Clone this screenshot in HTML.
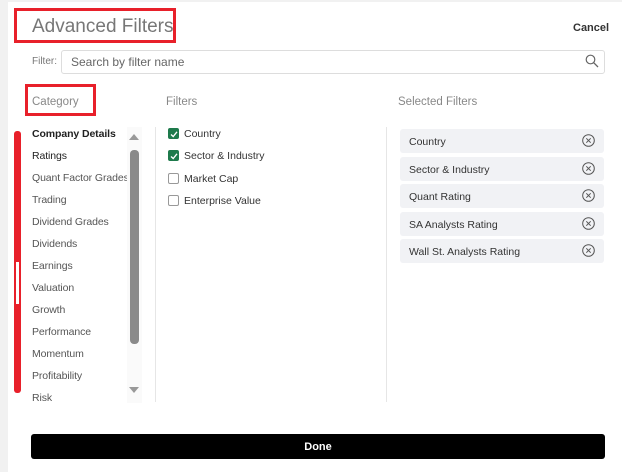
<!DOCTYPE html>
<html><head><meta charset="utf-8"><style>
*{margin:0;padding:0;box-sizing:border-box}
body{width:622px;height:472px;overflow:hidden;background:#f1f1f1;font-family:"Liberation Sans",Arial,sans-serif;position:relative}
.m{position:absolute;left:8px;top:2px;right:0;bottom:0;background:#fff}
.a{position:absolute;white-space:nowrap}
.cat{position:absolute;left:32px;font-size:10.5px;color:#555;letter-spacing:-0.1px;white-space:nowrap}
.cb{position:absolute;left:168px;width:11px;height:11px;border-radius:2px;border:1px solid #999;background:#fff}
.cb.on{background:#1e7a4c;border-color:#1e7a4c}
.fl{position:absolute;left:184px;font-size:10.5px;color:#333}
.chip{position:absolute;left:400px;width:204px;height:24px;background:#f1f2f5;border-radius:3px;font-size:10.5px;color:#333;padding:7px 0 0 9px}
.x{position:absolute;right:9px;top:5px;width:13px;height:13px}
</style></head><body>
<div class="m"></div>
<div class="a" style="left:14px;top:8px;width:162px;height:35px;border:3px solid #e8202a"></div>
<div class="a" style="left:32px;top:16px;font-size:19px;color:#777">Advanced Filters</div>
<div class="a" style="left:573px;top:22px;font-size:11px;font-weight:bold;color:#333">Cancel</div>
<div class="a" style="left:32px;top:56px;font-size:10px;color:#777">Filter:</div>
<div class="a" style="left:61px;top:50px;width:544px;height:24px;border:1px solid #ddd;border-radius:3px"></div>
<div class="a" style="left:71px;top:55px;font-size:12px;color:#666">Search by filter name</div>
<svg class="a" style="left:585px;top:54px" width="14" height="14" viewBox="0 0 14 14"><circle cx="5.5" cy="5.5" r="4.3" fill="none" stroke="#666" stroke-width="1.2"/><path d="M8.7 8.7L13 13" stroke="#666" stroke-width="1.3"/></svg>
<div class="a" style="left:25px;top:84px;width:71px;height:32px;border:3px solid #e8202a"></div>
<div class="a" style="left:32px;top:96px;font-size:11.5px;color:#888">Category</div>
<div class="a" style="left:166px;top:96px;font-size:11.5px;color:#888">Filters</div>
<div class="a" style="left:398px;top:96px;font-size:11.5px;color:#888">Selected Filters</div>
<div class="cat" style="top:128px;color:#222;font-weight:bold">Company Details</div>
<div class="cat" style="top:150px;color:#222">Ratings</div>
<div class="cat" style="top:172px">Quant Factor Grades</div>
<div class="cat" style="top:194px">Trading</div>
<div class="cat" style="top:216px">Dividend Grades</div>
<div class="cat" style="top:238px">Dividends</div>
<div class="cat" style="top:260px">Earnings</div>
<div class="cat" style="top:282px">Valuation</div>
<div class="cat" style="top:304px">Growth</div>
<div class="cat" style="top:326px">Performance</div>
<div class="cat" style="top:348px">Momentum</div>
<div class="cat" style="top:370px">Profitability</div>
<div class="cat" style="top:392px;height:10px;overflow:hidden">Risk</div>
<div class="a" style="left:127px;top:127px;width:15px;height:276px;background:#fafafa"></div>
<div class="a" style="left:130px;top:150px;width:9px;height:194px;background:#8a8a8a;border-radius:4px"></div>
<div class="a" style="left:129px;top:134px;width:0;height:0;border-left:5px solid transparent;border-right:5px solid transparent;border-bottom:6px solid #999"></div>
<div class="a" style="left:129px;top:387px;width:0;height:0;border-left:5px solid transparent;border-right:5px solid transparent;border-top:6px solid #999"></div>
<div class="a" style="left:155px;top:127px;width:1px;height:275px;background:#e6e6e6"></div>
<div class="a" style="left:386px;top:127px;width:1px;height:275px;background:#e6e6e6"></div>
<div class="a" style="left:14px;top:131px;width:7px;height:262px;background:#e8202a;border-radius:3px"></div>
<div class="a" style="left:16px;top:262px;width:3px;height:42px;background:#fff"></div>
<div class="cb on" style="top:128px"></div><svg class="a" style="left:170px;top:130px" width="8" height="8"><path d="M1 4.5L3.2 6.5L7 1.8" stroke="#fff" stroke-width="1.3" fill="none"/></svg>
<div class="fl" style="top:128px">Country</div>
<div class="cb on" style="top:150px"></div><svg class="a" style="left:170px;top:152px" width="8" height="8"><path d="M1 4.5L3.2 6.5L7 1.8" stroke="#fff" stroke-width="1.3" fill="none"/></svg>
<div class="fl" style="top:150px">Sector &amp; Industry</div>
<div class="cb" style="top:173px"></div><div class="fl" style="top:173px">Market Cap</div>
<div class="cb" style="top:195px"></div><div class="fl" style="top:195px">Enterprise Value</div>
<div class="chip" style="top:129px">Country<svg class="x" viewBox="0 0 13 13"><circle cx="6.5" cy="6.5" r="5.8" fill="none" stroke="#555"/><path d="M4.3 4.3L8.7 8.7M8.7 4.3L4.3 8.7" stroke="#555"/></svg></div>
<div class="chip" style="top:157px">Sector &amp; Industry<svg class="x" viewBox="0 0 13 13"><circle cx="6.5" cy="6.5" r="5.8" fill="none" stroke="#555"/><path d="M4.3 4.3L8.7 8.7M8.7 4.3L4.3 8.7" stroke="#555"/></svg></div>
<div class="chip" style="top:184px">Quant Rating<svg class="x" viewBox="0 0 13 13"><circle cx="6.5" cy="6.5" r="5.8" fill="none" stroke="#555"/><path d="M4.3 4.3L8.7 8.7M8.7 4.3L4.3 8.7" stroke="#555"/></svg></div>
<div class="chip" style="top:212px">SA Analysts Rating<svg class="x" viewBox="0 0 13 13"><circle cx="6.5" cy="6.5" r="5.8" fill="none" stroke="#555"/><path d="M4.3 4.3L8.7 8.7M8.7 4.3L4.3 8.7" stroke="#555"/></svg></div>
<div class="chip" style="top:239px">Wall St. Analysts Rating<svg class="x" viewBox="0 0 13 13"><circle cx="6.5" cy="6.5" r="5.8" fill="none" stroke="#555"/><path d="M4.3 4.3L8.7 8.7M8.7 4.3L4.3 8.7" stroke="#555"/></svg></div>
<div class="a" style="left:31px;top:434px;width:574px;height:25px;background:#000;border-radius:3px"></div>
<div class="a" style="left:31px;top:441px;width:574px;text-align:center;color:#fff;font-size:11px;font-weight:bold">Done</div>
</body></html>
